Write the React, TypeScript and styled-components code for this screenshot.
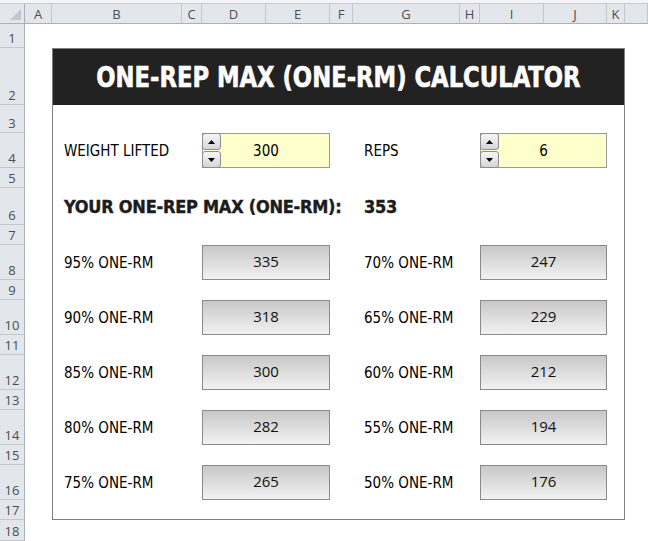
import styled, { createGlobalStyle } from "styled-components";

const GlobalStyle = createGlobalStyle`
    html, body {
        margin: 0;
        padding: 0;
        background: #ffffff;
    }
`;

const COLS = ["A", "B", "C", "D", "E", "F", "G", "H", "I", "J", "K", ""];
const COL_WIDTHS = "25px 27px 130px 20px 64px 64px 23px 107px 20px 64px 63px 18px 1fr";
const ROW_HEIGHTS = [24, 57, 28, 35, 20, 37, 20, 35, 20, 35, 20, 35, 20, 35, 20, 35, 20, 21];

const LEFT = [
    { pct: 95, value: 335 },
    { pct: 90, value: 318 },
    { pct: 85, value: 300 },
    { pct: 80, value: 282 },
    { pct: 75, value: 265 },
];

const RIGHT = [
    { pct: 70, value: 247 },
    { pct: 65, value: 229 },
    { pct: 60, value: 212 },
    { pct: 55, value: 194 },
    { pct: 50, value: 176 },
];

function Spinner() {
    return (
        <SpinBox>
            <SpinButton>
                <svg width="7" height="4" viewBox="0 0 7 4"><path d="M0 4 L3.5 0 L7 4 Z" fill="#000" /></svg>
            </SpinButton>
            <SpinButton>
                <svg width="7" height="4" viewBox="0 0 7 4"><path d="M0 0 L3.5 4 L7 0 Z" fill="#000" /></svg>
            </SpinButton>
        </SpinBox>
    );
}

export default function App() {
    return (
        <>
            <GlobalStyle />
            <Window>
                <TopStrip />
                <Sheet>
                    <Corner />
                    {COLS.map((c, i) => (
                        <ColHead key={i}>{c}</ColHead>
                    ))}
                    {ROW_HEIGHTS.map((_, i) => (
                        <RowHead key={i} $row={i + 2}>{i + 1}</RowHead>
                    ))}

                    <Panel>
                        <TitleBar>
                            <Title>ONE-REP MAX (ONE-RM) CALCULATOR</Title>
                        </TitleBar>
                        <Body>
                            <Row $h={35}>
                                <Label>WEIGHT LIFTED</Label>
                                <InputCell>
                                    <Spinner />
                                    300
                                </InputCell>
                                <span />
                                <Label>REPS</Label>
                                <InputCell>
                                    <Spinner />
                                    6
                                </InputCell>
                            </Row>
                            <Row $h={37}>
                                <Heading>YOUR ONE-REP MAX (ONE-RM):</Heading>
                                <Result>353</Result>
                            </Row>
                            {LEFT.map((l, i) => (
                                <Row key={l.pct} $h={35}>
                                    <Label>{l.pct}% ONE-RM</Label>
                                    <ValueBox>{l.value}</ValueBox>
                                    <span />
                                    <Label>{RIGHT[i].pct}% ONE-RM</Label>
                                    <ValueBox>{RIGHT[i].value}</ValueBox>
                                </Row>
                            ))}
                        </Body>
                    </Panel>
                </Sheet>
            </Window>
        </>
    );
}

const Window = styled.div`
    width: 648px;
    height: 541px;
    overflow: hidden;
    background: #ffffff;
    font-family: "DejaVu Sans Condensed", "DejaVu Sans", sans-serif;
`;

const TopStrip = styled.div`
    height: 3px;
    background: #f4f5f7;
    border-bottom: 1px solid #c9cdd3;
`;

const Sheet = styled.div`
    display: grid;
    grid-template-columns: ${COL_WIDTHS};
    grid-template-rows: 20px ${ROW_HEIGHTS.map((h) => `${h}px`).join(" ")};
`;

const Corner = styled.div`
    grid-row: 1;
    grid-column: 1;
    position: relative;
    background: #e3e7ec;
    border-right: 1px solid #a9b0b9;
    border-bottom: 1px solid #a9b0b9;
    box-sizing: border-box;

    &::after {
        content: "";
        position: absolute;
        right: 3px;
        bottom: 3px;
        border-left: 11px solid transparent;
        border-bottom: 11px solid #c2c7cd;
    }
`;

const ColHead = styled.div`
    grid-row: 1;
    display: flex;
    align-items: center;
    justify-content: center;
    box-sizing: border-box;
    background: #e3e7ec;
    border-right: 1px solid #c3c8cf;
    border-bottom: 1px solid #a9b0b9;
    font-family: "Open Sans", "Liberation Sans", sans-serif;
    font-size: 13px;
    color: #4a4d52;
`;

const RowHead = styled.div<{ $row: number }>`
    grid-column: 1;
    grid-row: ${(p) => p.$row};
    display: flex;
    align-items: flex-end;
    justify-content: center;
    padding-bottom: 1px;
    box-sizing: border-box;
    background: #e3e7ec;
    border-right: 1px solid #a9b0b9;
    border-bottom: 1px solid #c3c8cf;
    font-family: "Open Sans", "Liberation Sans", sans-serif;
    font-size: 13px;
    line-height: 16px;
    color: #4a4d52;
`;

const Panel = styled.div`
    grid-column: 3 / 13;
    grid-row: 3 / 19;
    display: flex;
    flex-direction: column;
    border: 1px solid #7f7f7f;
`;

const TitleBar = styled.div`
    height: 56px;
    display: flex;
    align-items: center;
    justify-content: center;
    background: #222222;
`;

const Title = styled.h1`
    margin: 0;
    display: inline-block;
    transform: scaleX(0.87);
    font-family: "DejaVu Sans Condensed", "DejaVu Sans", sans-serif;
    font-weight: 700;
    font-size: 29px;
    color: #ffffff;
    white-space: nowrap;
    -webkit-text-stroke: 0.6px #ffffff;
`;

const Body = styled.div`
    display: flex;
    flex-direction: column;
    gap: 20px;
    padding: 28px 0 19px;
`;

const Row = styled.div<{ $h: number }>`
    height: ${(p) => p.$h}px;
    display: grid;
    grid-template-columns: 149px 128px 23px 127px 127px 17px;
    align-items: stretch;
`;

const Label = styled.div`
    display: flex;
    align-items: center;
    padding-left: 11px;
    font-size: 15px;
    color: #000000;
    white-space: nowrap;
`;

const InputCell = styled.div`
    position: relative;
    display: flex;
    align-items: center;
    justify-content: center;
    background: #ffffcc;
    border: 1px solid #9a9a9a;
    font-size: 15px;
    color: #000000;
`;

const SpinBox = styled.div`
    position: absolute;
    left: -1px;
    top: -1px;
    bottom: -1px;
    width: 19px;
    display: flex;
    flex-direction: column;
    gap: 1px;
`;

const SpinButton = styled.div`
    flex: 1;
    display: flex;
    align-items: center;
    justify-content: center;
    border: 1px solid #8d8d8d;
    border-radius: 3px;
    background: linear-gradient(#f6f6f6, #d6d6d6);
`;

const Heading = styled.div`
    grid-column: 1 / 4;
    display: flex;
    align-items: center;
    padding-left: 11px;
    font-family: "DejaVu Sans Condensed", "DejaVu Sans", sans-serif;
    font-weight: 700;
    font-size: 18px;
    letter-spacing: -0.25px;
    color: #1c1c1c;
    white-space: nowrap;
    -webkit-text-stroke: 0.4px #1c1c1c;
`;

const Result = styled(Heading)`
    grid-column: 4;
`;

const ValueBox = styled.div`
    display: flex;
    align-items: center;
    justify-content: center;
    padding-bottom: 3px;
    border: 1px solid #8a8a8a;
    background: linear-gradient(#c8c8c8, #f2f2f2);
    font-family: "Open Sans", "Liberation Sans", sans-serif;
    font-size: 15px;
    color: #111111;
`;
